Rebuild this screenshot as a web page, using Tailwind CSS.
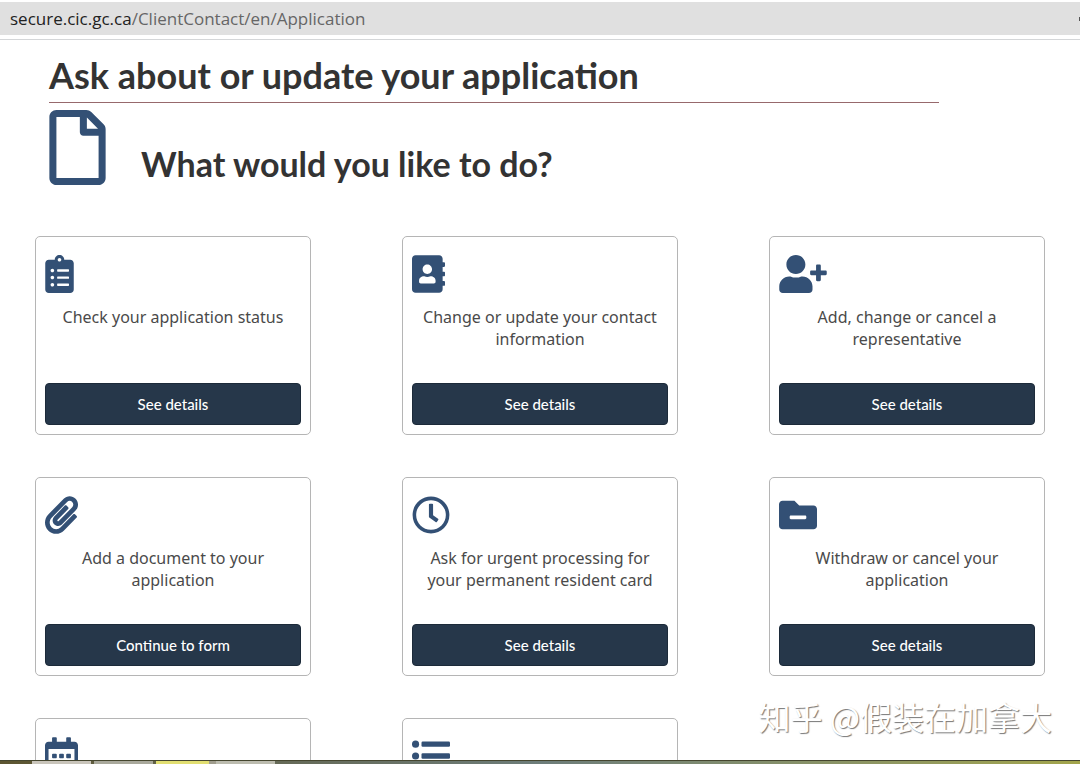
<!DOCTYPE html>
<html lang="en">
<head>
    <meta charset="UTF-8" />
    <title>Ask about or update your application</title>
    <meta name="viewport" content="width=device-width, initial-scale=1" />
    <script src="https://cdn.jsdelivr.net/npm/@tailwindcss/browser@4"></script>
</head>
<body class="relative h-screen overflow-hidden flex flex-col bg-white font-['Noto_Sans',sans-serif] text-[#4a4a4a]">
    <!-- Address bar -->
    <header class="shrink-0 pt-[2px] pb-1 border-b border-[#d4d6d8]">
        <div class="h-[33px] bg-[#e0e0e0] flex items-center pl-[10px]">
            <div role="textbox" aria-label="Address" class="flex-1 text-[17px] leading-6 font-['Open_Sans',sans-serif] text-[#666]"><span class="text-[#222]">secure.cic.gc.ca</span>/ClientContact/en/Application</div>
            <div class="w-px h-1 bg-[#555]"></div>
        </div>
    </header>

    <main class="flex-1 min-h-0 overflow-hidden px-[35px]">
        <div class="pl-[14px]">
            <h1 class="mr-[106px] pt-3 pb-1 border-b border-[#97696c] text-4xl leading-[46px] font-bold font-['Lato',sans-serif] text-[#333]">Ask about or update your application</h1>
            <div class="flex items-end gap-[35px] pt-[7px]">
                <svg class="w-[57px] h-[75px] text-[#335075]" fill="currentColor" viewBox="0 0 384 512"><path d="M369.9 97.9L286 14C277 5 264.8 0 252.1 0H48C21.5 0 0 21.5 0 48v416c0 26.5 21.5 48 48 48h288c26.5 0 48-21.5 48-48V131.900c0-12.700-5.100-25-14.100-34zM332.100 128H256V51.900l76.100 76.100zM48 464V48h160v104c0 13.300 10.700 24 24 24h104v288H48z"/></svg>
                <h2 class="text-[34px] leading-[42px] font-bold font-['Lato',sans-serif] text-[#333]">What would you like to do?</h2>
            </div>
        </div>

        <div class="grid grid-cols-3 gap-x-[91px] gap-y-[42px] mt-[51px]">
            <section class="h-[199px] flex flex-col border border-[#b5b5b5] rounded-[5px] px-[9px] pt-[18px] pb-[9px]">
                <svg class="w-[29px] h-[38px] text-[#335075]" fill="currentColor" viewBox="0 0 384 512"><path d="M336 64h-80c0-35.300-28.700-64-64-64s-64 28.700-64 64H48C21.500 64 0 85.500 0 112v352c0 26.500 21.500 48 48 48h288c26.500 0 48-21.500 48-48V112c0-26.500-21.500-48-48-48zM96 424c-13.300 0-24-10.700-24-24s10.700-24 24-24 24 10.700 24 24-10.700 24-24 24zm0-96c-13.300 0-24-10.700-24-24s10.700-24 24-24 24 10.700 24 24-10.700 24-24 24zm0-96c-13.300 0-24-10.700-24-24s10.700-24 24-24 24 10.700 24 24-10.700 24-24 24zm96-192c13.300 0 24 10.700 24 24s-10.700 24-24 24-24-10.700-24-24 10.700-24 24-24zm128 368c0 4.400-3.600 8-8 8H168c-4.400 0-8-3.600-8-8v-16c0-4.400 3.600-8 8-8h144c4.400 0 8 3.600 8 8v16zm0-96c0 4.400-3.600 8-8 8H168c-4.400 0-8-3.600-8-8v-16c0-4.400 3.600-8 8-8h144c4.400 0 8 3.600 8 8v16zm0-96c0 4.400-3.600 8-8 8H168c-4.400 0-8-3.600-8-8v-16c0-4.400 3.600-8 8-8h144c4.400 0 8 3.600 8 8v16z"/></svg>
                <p class="mt-[13px] text-base leading-[22px] text-center">Check your application status</p>
                <button type="button" class="mt-auto h-[42px] rounded-[4px] border border-[#1c2a39] bg-[#26374a] text-[15px] font-medium font-['Lato',sans-serif] text-white">See details</button>
            </section>

            <section class="h-[199px] flex flex-col border border-[#b5b5b5] rounded-[5px] px-[9px] pt-[18px] pb-[9px]">
                <svg class="w-[33px] h-[38px] text-[#335075]" fill="currentColor" viewBox="0 0 448 512"><path d="M436 160c6.600 0 12-5.400 12-12v-40c0-6.600-5.400-12-12-12h-20V48c0-26.500-21.500-48-48-48H48C21.500 0 0 21.500 0 48v416c0 26.500 21.500 48 48 48h320c26.500 0 48-21.500 48-48v-48h20c6.600 0 12-5.400 12-12v-40c0-6.600-5.400-12-12-12h-20v-64h20c6.600 0 12-5.400 12-12v-40c0-6.600-5.400-12-12-12h-20v-64h20zm-228-32c35.300 0 64 28.700 64 64s-28.700 64-64 64-64-28.700-64-64 28.700-64 64-64zm112 236.800c0 10.600-10 19.200-22.400 19.200H118.400C106 384 96 375.400 96 364.800v-19.200c0-31.800 30.100-57.600 67.200-57.600h5c12.300 5.100 25.700 8 39.800 8s27.600-2.900 39.800-8h5c37.100 0 67.200 25.800 67.200 57.600v19.200z"/></svg>
                <p class="mt-[13px] text-base leading-[22px] text-center">Change or update your contact information</p>
                <button type="button" class="mt-auto h-[42px] rounded-[4px] border border-[#1c2a39] bg-[#26374a] text-[15px] font-medium font-['Lato',sans-serif] text-white">See details</button>
            </section>

            <section class="h-[199px] flex flex-col border border-[#b5b5b5] rounded-[5px] px-[9px] pt-[18px] pb-[9px]">
                <svg class="w-[48px] h-[38px] text-[#335075]" fill="currentColor" viewBox="0 0 640 512"><path d="M624 208h-64v-64c0-8.800-7.200-16-16-16h-32c-8.800 0-16 7.200-16 16v64h-64c-8.800 0-16 7.200-16 16v32c0 8.800 7.200 16 16 16h64v64c0 8.800 7.200 16 16 16h32c8.800 0 16-7.200 16-16v-64h64c8.800 0 16-7.200 16-16v-32c0-8.800-7.200-16-16-16zm-400 48c70.700 0 128-57.300 128-128S294.700 0 224 0 96 57.300 96 128s57.300 128 128 128zm89.600 32h-16.700c-22.200 10.200-46.900 16-72.900 16s-50.600-5.800-72.900-16h-16.700C60.200 288 0 348.200 0 422.400V464c0 26.500 21.500 48 48 48h352c26.500 0 48-21.500 48-48v-41.600c0-74.200-60.200-134.400-134.400-134.400z"/></svg>
                <p class="mt-[13px] px-6 text-base leading-[22px] text-center">Add, change or cancel a representative</p>
                <button type="button" class="mt-auto h-[42px] rounded-[4px] border border-[#1c2a39] bg-[#26374a] text-[15px] font-medium font-['Lato',sans-serif] text-white">See details</button>
            </section>

            <section class="h-[199px] flex flex-col border border-[#b5b5b5] rounded-[5px] px-[9px] pt-[18px] pb-[9px]">
                <svg class="w-[33px] h-[38px] text-[#335075]" fill="currentColor" viewBox="0 0 448 512"><path d="M43.246 466.142c-58.430-60.289-57.341-157.511 1.386-217.581L254.392 34c44.316-45.332 116.351-45.336 160.671 0 43.890 44.894 43.943 117.329 0 162.276L232.214 383.128c-29.855 30.537-78.633 30.111-107.982-.998-28.275-29.970-27.368-77.473 1.452-106.953l143.743-146.835c6.182-6.314 16.312-6.422 22.626-.241l22.861 22.379c6.315 6.182 6.422 16.312.241 22.626L171.427 319.927c-4.932 5.045-5.236 13.428-.648 18.292 4.372 4.634 11.245 4.711 15.688.165l182.849-186.851c19.613-20.062 19.613-52.725-.011-72.798-19.189-19.627-49.957-19.637-69.154 0L90.390 293.295c-34.763 35.560-35.299 93.120-1.191 128.313 34.010 35.093 88.985 35.137 123.058.286l172.060-175.999c6.177-6.319 16.307-6.433 22.626-.256l22.877 22.364c6.319 6.177 6.434 16.307.256 22.626l-172.060 175.998c-59.576 60.938-155.943 60.216-214.770-.485z"/></svg>
                <p class="mt-[13px] px-6 text-base leading-[22px] text-center">Add a document to your application</p>
                <button type="button" class="mt-auto h-[42px] rounded-[4px] border border-[#1c2a39] bg-[#26374a] text-[15px] font-medium font-['Lato',sans-serif] text-white">Continue to form</button>
            </section>

            <section class="h-[199px] flex flex-col border border-[#b5b5b5] rounded-[5px] px-[9px] pt-[18px] pb-[9px]">
                <svg class="w-[38px] h-[38px] text-[#335075]" fill="currentColor" viewBox="0 0 512 512"><path d="M256 8C119 8 8 119 8 256s111 248 248 248 248-111 248-248S393 8 256 8zm0 448c-110.500 0-200-89.500-200-200S145.500 56 256 56s200 89.500 200 200-89.500 200-200 200zm61.800-104.400l-84.900-61.700c-3.100-2.300-4.900-5.900-4.900-9.700V116c0-6.600 5.400-12 12-12h32c6.600 0 12 5.400 12 12v141.700l66.800 48.600c5.400 3.900 6.500 11.400 2.600 16.800L334.600 349c-3.900 5.300-11.400 6.500-16.800 2.600z"/></svg>
                <p class="mt-[13px] text-base leading-[22px] text-center">Ask for urgent processing for your permanent resident card</p>
                <button type="button" class="mt-auto h-[42px] rounded-[4px] border border-[#1c2a39] bg-[#26374a] text-[15px] font-medium font-['Lato',sans-serif] text-white">See details</button>
            </section>

            <section class="h-[199px] flex flex-col border border-[#b5b5b5] rounded-[5px] px-[9px] pt-[18px] pb-[9px]">
                <svg class="w-[38px] h-[38px] text-[#335075]" fill="currentColor" viewBox="0 0 512 512"><path d="M464 128H272l-64-64H48C21.490 64 0 85.490 0 112v288c0 26.510 21.490 48 48 48h416c26.510 0 48-21.490 48-48V176c0-26.510-21.490-48-48-48zm-96 168c0 8.840-7.160 16-16 16H160c-8.840 0-16-7.160-16-16v-16c0-8.840 7.160-16 16-16h192c8.840 0 16 7.160 16 16v16z"/></svg>
                <p class="mt-[13px] px-6 text-base leading-[22px] text-center">Withdraw or cancel your application</p>
                <button type="button" class="mt-auto h-[42px] rounded-[4px] border border-[#1c2a39] bg-[#26374a] text-[15px] font-medium font-['Lato',sans-serif] text-white">See details</button>
            </section>

            <section class="h-[199px] border border-[#b5b5b5] rounded-[5px] px-[9px] pt-[18px]">
                <svg class="w-[33px] h-[38px] text-[#335075]" fill="currentColor" viewBox="0 0 448 512"><path d="M148 288h-40c-6.600 0-12-5.400-12-12v-40c0-6.600 5.400-12 12-12h40c6.600 0 12 5.400 12 12v40c0 6.600-5.400 12-12 12zm108-12v-40c0-6.600-5.400-12-12-12h-40c-6.600 0-12 5.400-12 12v40c0 6.600 5.400 12 12 12h40c6.600 0 12-5.400 12-12zm96 0v-40c0-6.600-5.400-12-12-12h-40c-6.600 0-12 5.400-12 12v40c0 6.600 5.400 12 12 12h40c6.600 0 12-5.400 12-12zm96-164v352c0 26.500-21.500 48-48 48H48c-26.500 0-48-21.500-48-48V112c0-26.500 21.500-48 48-48h48V12c0-6.600 5.400-12 12-12h40c6.600 0 12 5.400 12 12v52h128V12c0-6.600 5.400-12 12-12h40c6.600 0 12 5.400 12 12v52h48c26.500 0 48 21.500 48 48zm-48 346V160H48v298c0 3.300 2.700 6 6 6h340c3.300 0 6-2.700 6-6z"/></svg>
            </section>

            <section class="h-[199px] border border-[#b5b5b5] rounded-[5px] px-[9px] pt-[18px]">
                <svg class="w-[38px] h-[38px] text-[#335075]" fill="currentColor" viewBox="0 0 512 512"><circle cx="48" cy="96" r="48"/><circle cx="48" cy="256" r="48"/><circle cx="48" cy="416" r="48"/><rect x="128" y="60" width="384" height="72" rx="16"/><rect x="128" y="220" width="384" height="72" rx="16"/><rect x="128" y="380" width="384" height="72" rx="16"/></svg>
            </section>
        </div>
    </main>

    <!-- Top edge of the taskbar -->
    <footer class="shrink-0 h-1 flex border-t border-[#45462f] bg-linear-to-r from-[#5c5530] via-[#6d7d7a] to-[#a3a54b]">
        <div class="w-8"></div>
        <div class="w-[59px] bg-[#c9c5bb]"></div>
        <div class="w-[3px]"></div>
        <div class="w-[59px] bg-[#a9a99c]"></div>
        <div class="w-[3px]"></div>
        <div class="w-[53px] bg-[#e2df72]"></div>
        <div class="w-[7px] bg-[#a09d8d]"></div>
        <div class="w-[59px] bg-[#bcbcaf]"></div>
    </footer>

    <!-- Watermark -->
    <div class="absolute right-7 bottom-7 text-[32px] leading-10 font-['Noto_Sans_CJK_SC',sans-serif] text-white [text-shadow:1px_1px_1px_#777]" lang="zh">知乎 @假装在加拿大</div>
</body>
</html>
